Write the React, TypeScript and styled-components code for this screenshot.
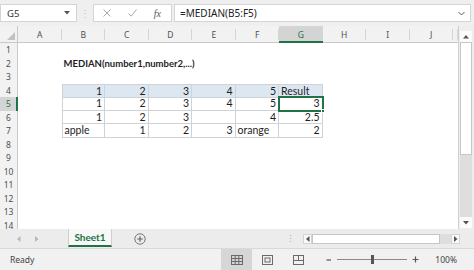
import React from 'react';
import styled, { createGlobalStyle, css } from 'styled-components';

const GREEN = '#217346';
const COLS = ['A', 'B', 'C', 'D', 'E', 'F', 'G', 'H', 'I', 'J'];
const COL_TEMPLATE = '18px repeat(10, 43.5px) 1fr';
const UI_FONT = '"Noto Sans", "Open Sans", "Liberation Sans", sans-serif';
const CELL_FONT = 'Lato, "Open Sans", "Liberation Sans", sans-serif';

const GlobalStyle = createGlobalStyle`
  html, body { margin: 0; padding: 0; background: #f0f0f0; }
  body { font-family: ${UI_FONT}; }
`;

const Window = styled.div`
  width: 474px;
  height: 270px;
  display: flex;
  flex-direction: column;
  background: #efefef;
  overflow: hidden;
`;

/* ---------- formula bar ---------- */
const FormulaBar = styled.div`
  height: 26px;
  flex: none;
  display: flex;
  align-items: center;
  padding: 0 3px 0 0;
  box-sizing: border-box;
`;

const Box = styled.div`
  height: 18px;
  box-sizing: border-box;
  background: #fff;
  border: 1px solid #d4d4d4;
  display: flex;
  align-items: center;
`;

const NameBox = styled(Box)`
  width: 77px;
  padding: 0 6px 0 6px;
  justify-content: space-between;
  font-size: 9.5px;
  color: #333;
`;

const Separator = styled.div`
  width: 16px;
  text-align: center;
  color: #c4c4c4;
  font-size: 10px;
  line-height: 18px;
`;

const FxArea = styled(Box)`
  width: 79px;
  padding: 0 10px 0 9px;
  justify-content: space-between;
`;

const Fx = styled.span`
  font-family: "Liberation Serif", serif;
  font-style: italic;
  font-size: 10px;
  color: #555;
`;

const FormulaInput = styled(Box)`
  flex: 1;
  margin-left: 2px;
  padding: 0 5px 0 5px;
  justify-content: space-between;
  font-size: 10px;
  color: #222;
`;

/* ---------- sheet ---------- */
const SheetArea = styled.div`
  height: 203px;
  flex: none;
  display: flex;
`;

const Grid = styled.div`
  width: 459px;
  flex: none;
  display: flex;
  flex-direction: column;
  background: #fff;
  overflow: hidden;
  border-right: 1px solid #d0d0d0;
  box-sizing: border-box;
`;

const Row = styled.div<{ $header?: boolean }>`
  display: grid;
  grid-template-columns: ${COL_TEMPLATE};
  height: ${(p) => (p.$header ? '17px' : '13.5px')};
  flex: none;
`;

const Corner = styled.div`
  background: #f2f2f2;
  border-right: 1px solid #c9c9c9;
  border-bottom: 1px solid #c9c9c9;
  box-sizing: border-box;
  display: flex;
  align-items: flex-end;
  justify-content: flex-end;
  padding: 0 2px 2px 0;
`;

const ColHeader = styled.div<{ $selected?: boolean }>`
  background: ${(p) => (p.$selected ? '#d4d4d4' : '#f2f2f2')};
  border-bottom: ${(p) => (p.$selected ? `2px solid ${GREEN}` : '1px solid #c9c9c9')};
  box-sizing: border-box;
  position: relative;
  display: flex;
  align-items: center;
  justify-content: center;
  font-size: 8.5px;
  color: ${(p) => (p.$selected ? GREEN : '#505050')};
  padding-top: ${(p) => (p.$selected ? '1px' : '0')};
  &::after {
    content: '';
    position: absolute;
    right: 0;
    top: 3px;
    bottom: 2px;
    width: 1px;
    background: #d6d6d6;
  }
`;

const RowHeader = styled.div<{ $selected?: boolean }>`
  background: ${(p) => (p.$selected ? '#d4d4d4' : '#f2f2f2')};
  border-right: ${(p) => (p.$selected ? `2px solid ${GREEN}` : '1px solid #c9c9c9')};
  box-sizing: border-box;
  display: flex;
  align-items: center;
  justify-content: center;
  font-size: 8.5px;
  color: ${(p) => (p.$selected ? GREEN : '#505050')};
  padding-left: ${(p) => (p.$selected ? '1px' : '0')};
`;

const Cell = styled.div<{
  $table?: boolean;
  $fill?: boolean;
  $left?: boolean;
  $bold?: boolean;
  $topEdge?: boolean;
  $leftEdge?: boolean;
  $selected?: boolean;
}>`
  box-sizing: border-box;
  font-family: ${CELL_FONT};
  font-size: ${(p) => (p.$bold ? '9.5px' : '10.5px')};
  line-height: 12.5px;
  color: #1e1e1e;
  white-space: nowrap;
  display: flex;
  align-items: flex-end;
  justify-content: ${(p) => (p.$left ? 'flex-start' : 'flex-end')};
  padding: 0 2px 0 2px;
  background: ${(p) => (p.$fill ? '#dde7f2' : 'transparent')};
  font-weight: ${(p) => (p.$bold ? 700 : 400)};
  position: relative;
  ${(p) =>
    p.$table &&
    css`
      border-right: 1px solid #cfd3d8;
      border-bottom: 1px solid #cfd3d8;
    `}
  ${(p) => p.$topEdge && css`border-top: 1px solid #cfd3d8;`}
  ${(p) => p.$leftEdge && css`border-left: 1px solid #cfd3d8;`}
  ${(p) =>
    p.$selected &&
    css`
      z-index: 1;
      outline: 2px solid ${GREEN};
      outline-offset: -1px;
      &::after {
        content: '';
        position: absolute;
        right: -3px;
        bottom: -3px;
        width: 4px;
        height: 4px;
        background: ${GREEN};
        border: 1px solid #fff;
        box-sizing: border-box;
      }
    `}
`;

const Overflow = styled.span`
  overflow: visible;
`;

/* ---------- vertical scroll ---------- */
const VScroll = styled.div`
  width: 15px;
  flex: none;
  display: flex;
  flex-direction: column;
  padding: 5px 2px 1px 1px;
  box-sizing: border-box;
  background: #eeeeee;
`;

const ScrollBtn = styled.div`
  height: 11px;
  flex: none;
  display: flex;
  align-items: center;
  justify-content: center;
  background: #fbfbfb;
`;

const VThumb = styled.div`
  height: 113px;
  flex: none;
  background: #fff;
  border: 1px solid #c6c6c6;
  box-sizing: border-box;
`;

const VTrack = styled.div`
  flex: 1;
  background: #dedede;
`;

/* ---------- tab bar ---------- */
const TabBar = styled.div`
  height: 19px;
  flex: none;
  display: flex;
  align-items: stretch;
  background: #ececec;
`;

const NavArrows = styled.div`
  width: 68px;
  display: flex;
  align-items: center;
  padding-left: 17px;
  gap: 14px;
  box-sizing: border-box;
`;

const SheetTab = styled.div`
  width: 44px;
  background: #f7f7f7;
  border-left: 1px solid #cfcfcf;
  border-right: 1px solid #cfcfcf;
  border-bottom: 2px solid ${GREEN};
  box-sizing: border-box;
  display: flex;
  align-items: center;
  justify-content: center;
  font-family: ${CELL_FONT};
  font-weight: 700;
  font-size: 10px;
  color: ${GREEN};
  margin-bottom: 1px;
`;

const AddSheet = styled.div`
  width: 56px;
  display: flex;
  align-items: center;
  justify-content: center;
`;

const TabSpacer = styled.div`
  flex: 1;
`;

const HScroll = styled.div`
  width: 190px;
  display: flex;
  align-items: center;
  padding: 0 14px 0 0;
  box-sizing: border-box;
`;

const HDots = styled.div`
  width: 13px;
  text-align: center;
  color: #aaa;
  font-size: 9px;
  margin-right: 6px;
`;

const HBtn = styled.div`
  width: 9px;
  height: 10px;
  display: flex;
  align-items: center;
  justify-content: center;
  background: #fafafa;
  border: 1px solid #d4d4d4;
  box-sizing: border-box;
`;

const HThumb = styled.div`
  width: 128px;
  height: 10px;
  background: #fff;
  border: 1px solid #c6c6c6;
  box-sizing: border-box;
`;

const HTrack = styled.div`
  flex: 1;
  height: 10px;
  background: #dedede;
`;

/* ---------- status bar ---------- */
const StatusBar = styled.div`
  height: 22px;
  flex: none;
  display: flex;
  align-items: stretch;
  background: #f1f1f1;
  border-top: 1px solid #d9d9d9;
  box-sizing: border-box;
`;

const StatusText = styled.div`
  flex: 1;
  display: flex;
  align-items: center;
  padding-left: 10px;
  font-size: 8.5px;
  color: #444;
`;

const ViewBtn = styled.div<{ $active?: boolean }>`
  width: 31px;
  display: flex;
  align-items: center;
  justify-content: center;
  background: ${(p) => (p.$active ? '#d6d6d6' : 'transparent')};
`;

const ZoomCtl = styled.div`
  display: flex;
  align-items: center;
  padding: 0 17px 0 12px;
  gap: 3px;
  font-size: 8.5px;
  color: #444;
`;

const Slider = styled.div`
  width: 70px;
  height: 1px;
  background: #8a8a8a;
  position: relative;
  margin: 0 2px;
`;

const SliderThumb = styled.div`
  position: absolute;
  left: 34px;
  top: -4px;
  width: 3px;
  height: 9px;
  background: #555;
`;

const ZoomPct = styled.span`
  margin-left: 13px;
`;

/* ---------- icons ---------- */
const TriDown = ({ color = '#555' }: { color?: string }) => (
  <svg width="6" height="4" viewBox="0 0 6 4"><polygon points="0,0 6,0 3,3.5" fill={color} /></svg>
);
const TriUp = ({ color = '#555' }: { color?: string }) => (
  <svg width="6" height="4" viewBox="0 0 6 4"><polygon points="0,3.5 6,3.5 3,0" fill={color} /></svg>
);
const TriLeft = ({ color = '#555' }: { color?: string }) => (
  <svg width="4" height="6" viewBox="0 0 4 6"><polygon points="3.5,0 3.5,6 0,3" fill={color} /></svg>
);
const TriRight = ({ color = '#555' }: { color?: string }) => (
  <svg width="4" height="6" viewBox="0 0 4 6"><polygon points="0,0 0,6 3.5,3" fill={color} /></svg>
);
const XIcon = () => (
  <svg width="8" height="8" viewBox="0 0 8 8">
    <path d="M0.5 0.5 L7.5 7.5 M7.5 0.5 L0.5 7.5" stroke="#a8a8a8" strokeWidth="1" />
  </svg>
);
const CheckIcon = () => (
  <svg width="9" height="8" viewBox="0 0 9 8">
    <path d="M0.5 4.5 L3.2 7.2 L8.5 0.5" stroke="#a8a8a8" strokeWidth="1" fill="none" />
  </svg>
);
const Chevron = () => (
  <svg width="7" height="5" viewBox="0 0 7 5">
    <path d="M0.5 1 L3.5 4 L6.5 1" stroke="#555" strokeWidth="1" fill="none" />
  </svg>
);
const CornerTri = () => (
  <svg width="8" height="8" viewBox="0 0 8 8"><polygon points="8,0 8,8 0,8" fill="#c2c2c2" /></svg>
);
const PlusCircle = () => (
  <svg width="12" height="12" viewBox="0 0 12 12">
    <circle cx="6" cy="6" r="5.2" stroke="#777" strokeWidth="1" fill="none" />
    <path d="M6 3.2 V8.8 M3.2 6 H8.8" stroke="#666" strokeWidth="1.2" />
  </svg>
);
const NormalIcon = () => (
  <svg width="12" height="10" viewBox="0 0 12 10">
    <rect x="0.5" y="0.5" width="11" height="9" fill="none" stroke="#6a6a6a" />
    <path d="M4.2 0.5 V9.5 M7.8 0.5 V9.5 M0.5 3.5 H11.5 M0.5 6.5 H11.5" stroke="#6a6a6a" />
  </svg>
);
const LayoutIcon = () => (
  <svg width="11" height="10" viewBox="0 0 11 10">
    <rect x="0.5" y="0.5" width="10" height="9" fill="none" stroke="#6a6a6a" />
    <rect x="3" y="3" width="5" height="4" fill="none" stroke="#6a6a6a" />
  </svg>
);
const BreakIcon = () => (
  <svg width="11" height="10" viewBox="0 0 11 10">
    <rect x="0.5" y="0.5" width="10" height="9" fill="none" stroke="#6a6a6a" />
    <path d="M5.5 0.5 V5.5 M0.5 5.5 H10.5" stroke="#6a6a6a" />
  </svg>
);
const Minus = () => (
  <svg width="6" height="6" viewBox="0 0 6 6"><path d="M0.5 3 H5" stroke="#555" strokeWidth="1.2" /></svg>
);
const Plus = () => (
  <svg width="7" height="7" viewBox="0 0 7 7"><path d="M3.5 0.5 V6.5 M0.5 3.5 H6.5" stroke="#555" strokeWidth="1.2" /></svg>
);

/* ---------- data ---------- */
type V = string | null;
const TABLE: Record<number, V[]> = {
  4: ['1', '2', '3', '4', '5', 'Result'],
  5: ['1', '2', '3', '4', '5', '3'],
  6: ['1', '2', '3', null, '4', '2.5'],
  7: ['apple', '1', '2', '3', 'orange', '2'],
};
const isText = (v: V) => v !== null && isNaN(Number(v));

const ROWS = Array.from({ length: 14 }, (_, i) => i + 1);

export default function App() {
  return (
    <Window>
      <GlobalStyle />
      <FormulaBar>
        <NameBox>
          <span>G5</span>
          <TriDown />
        </NameBox>
        <Separator>⋮</Separator>
        <FxArea>
          <XIcon />
          <CheckIcon />
          <Fx>fx</Fx>
        </FxArea>
        <FormulaInput>
          <span>=MEDIAN(B5:F5)</span>
          <Chevron />
        </FormulaInput>
      </FormulaBar>

      <SheetArea>
        <Grid>
          <Row $header>
            <Corner>
              <CornerTri />
            </Corner>
            {COLS.map((c) => (
              <ColHeader key={c} $selected={c === 'G'}>
                {c}
              </ColHeader>
            ))}
            <ColHeader />
          </Row>
          {ROWS.map((r) => (
            <Row key={r}>
              <RowHeader $selected={r === 5}>{r}</RowHeader>
              {COLS.map((c, ci) => {
                if (r === 2 && c === 'B') {
                  return (
                    <Cell key={c} $left $bold>
                      <Overflow>MEDIAN(number1,number2,...)</Overflow>
                    </Cell>
                  );
                }
                const data = TABLE[r];
                if (data && ci >= 1 && ci <= 6) {
                  const v = data[ci - 1];
                  return (
                    <Cell
                      key={c}
                      $table
                      $fill={r === 4}
                      $topEdge={r === 4}
                      $leftEdge={ci === 1}
                      $left={isText(v)}
                      $selected={r === 5 && c === 'G'}
                    >
                      {v}
                    </Cell>
                  );
                }
                return <Cell key={c} />;
              })}
              <Cell />
            </Row>
          ))}
        </Grid>
        <VScroll>
          <ScrollBtn>
            <TriUp />
          </ScrollBtn>
          <VThumb />
          <VTrack />
          <ScrollBtn>
            <TriDown />
          </ScrollBtn>
        </VScroll>
      </SheetArea>

      <TabBar>
        <NavArrows>
          <TriLeft color="#b8b8b8" />
          <TriRight color="#b8b8b8" />
        </NavArrows>
        <SheetTab>Sheet1</SheetTab>
        <AddSheet>
          <PlusCircle />
        </AddSheet>
        <TabSpacer />
        <HScroll>
          <HDots>⋮</HDots>
          <HBtn>
            <TriLeft />
          </HBtn>
          <HThumb />
          <HTrack />
          <HBtn>
            <TriRight />
          </HBtn>
        </HScroll>
      </TabBar>

      <StatusBar>
        <StatusText>Ready</StatusText>
        <ViewBtn $active>
          <NormalIcon />
        </ViewBtn>
        <ViewBtn>
          <LayoutIcon />
        </ViewBtn>
        <ViewBtn>
          <BreakIcon />
        </ViewBtn>
        <ZoomCtl>
          <Minus />
          <Slider>
            <SliderThumb />
          </Slider>
          <Plus />
          <ZoomPct>100%</ZoomPct>
        </ZoomCtl>
      </StatusBar>
    </Window>
  );
}
